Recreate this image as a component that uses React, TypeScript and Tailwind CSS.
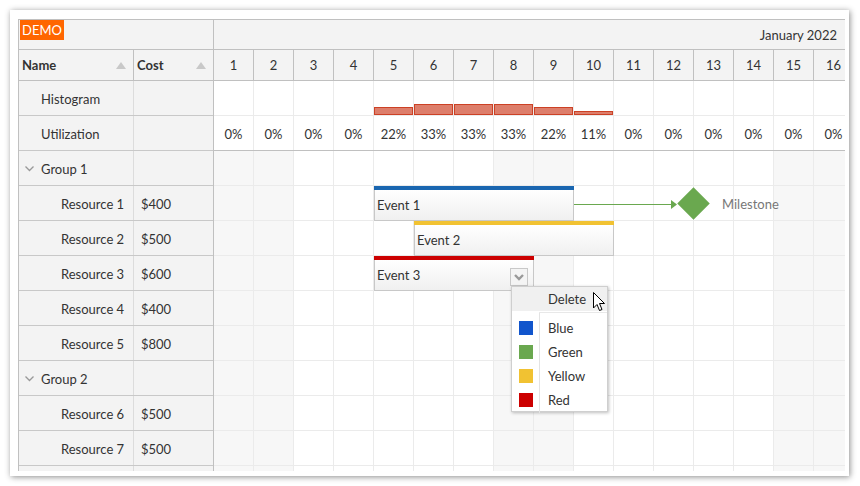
import React from "react";

const days = Array.from({ length: 16 }, (_, i) => i + 1);
const weekend = [1, 2, 8, 9, 15, 16];

// histogram bar height (px) and utilization label per day
const histogram: Record<number, number> = { 5: 8, 6: 11, 7: 11, 8: 11, 9: 8, 10: 4 };
const utilization: Record<number, string> = {
  5: "22%",
  6: "33%",
  7: "33%",
  8: "33%",
  9: "22%",
  10: "11%",
};

type Row = { id: string; name: string; cost?: string; group?: boolean };

const rows: Row[] = [
  { id: "g1", name: "Group 1", group: true },
  { id: "r1", name: "Resource 1", cost: "$400" },
  { id: "r2", name: "Resource 2", cost: "$500" },
  { id: "r3", name: "Resource 3", cost: "$600" },
  { id: "r4", name: "Resource 4", cost: "$400" },
  { id: "r5", name: "Resource 5", cost: "$800" },
  { id: "g2", name: "Group 2", group: true },
  { id: "r6", name: "Resource 6", cost: "$500" },
  { id: "r7", name: "Resource 7", cost: "$500" },
  { id: "r8", name: "" },
];

const menuColors = [
  { name: "Blue", color: "bg-[#1155cc]" },
  { name: "Green", color: "bg-[#6aa84f]" },
  { name: "Yellow", color: "bg-[#f1c232]" },
  { name: "Red", color: "bg-[#cc0000]" },
];

function SortArrow() {
  return (
    <svg width="10" height="7" viewBox="0 0 10 7" className="absolute right-[7px] top-[12px]">
      <polygon points="5,0 10,7 0,7" fill="#c8c8c8" />
    </svg>
  );
}

function Event({
  left,
  width,
  text,
  bar,
  menu,
}: {
  left: number;
  width: number;
  text: string;
  bar: string;
  menu?: boolean;
}) {
  return (
    <div className="absolute top-0 h-[35px] flex flex-col" style={{ left, width }}>
      <div className={`h-[4px] shrink-0 ${bar}`} />
      <div className="relative flex-1 flex items-center pl-[2px] pt-[1px] border-x border-b border-[#c8c8c8] bg-gradient-to-b from-white to-[#f0f0f0] text-[#333]">
        {text}
        {menu && (
          <div className="absolute right-[5px] bottom-[4px] w-[18px] h-[18px] border border-[#c8c8c8] bg-[#f4f4f4] flex items-center justify-center">
            <svg width="10" height="7" viewBox="0 0 10 7">
              <polyline points="1,1 5,5 9,1" fill="none" stroke="#999" strokeWidth="2.4" />
            </svg>
          </div>
        )}
      </div>
    </div>
  );
}

function TimelineRow({ row }: { row: Row }) {
  return (
    <div className="relative flex h-[35px] border-b border-[#ebebeb]">
      {days.map((d) => (
        <div
          key={d}
          className={`w-[40px] shrink-0 border-r border-[#ebebeb] ${
            weekend.includes(d) ? "bg-[#f7f7f7]" : "bg-white"
          }`}
        />
      ))}
      {row.id === "r1" && (
        <>
          <Event left={160} width={200} text="Event 1" bar="bg-[#1a66b0]" />
          <svg
            className="absolute left-[360px] top-[13px]"
            width="104"
            height="10"
            viewBox="0 0 104 10"
          >
            <line x1="0" y1="5.5" x2="98" y2="5.5" stroke="#6aa84f" strokeWidth="1" />
            <polygon points="97,1 103,5.5 97,10" fill="#6aa84f" />
          </svg>
          <div className="absolute left-[468px] top-[6px] w-[23px] h-[23px] rotate-45 bg-[#6aa84f]" />
          <div className="absolute left-[508px] top-0 h-[35px] pt-[2px] flex items-center text-[#777]">
            Milestone
          </div>
        </>
      )}
      {row.id === "r2" && <Event left={200} width={200} text="Event 2" bar="bg-[#f1c232]" />}
      {row.id === "r3" && <Event left={160} width={160} text="Event 3" bar="bg-[#cc0000]" menu />}
    </div>
  );
}

export default function App() {
  return (
    <div className="min-h-screen bg-white p-[10px] font-['Lato',sans-serif] text-[13px] text-[#333]">
      <div className="relative w-[839px] h-[466px] bg-white pl-[8px] pt-[9px] shadow-[1px_1px_6px_rgba(0,0,0,0.45)]">
        <div className="flex w-[827px] h-[452px] overflow-hidden border-l border-t border-[#c0c0c0]">
          {/* Row headers */}
          <div className="w-[195px] shrink-0 bg-[#f3f3f3] border-r border-[#c0c0c0]">
            <div className="h-[30px] border-b border-[#c0c0c0]">
              <span className="inline-block ml-[1px] h-[20px] px-[2px] leading-[20px] bg-[#ff6600] text-white">
                DEMO
              </span>
            </div>
            <div className="flex h-[31px] border-b border-[#c0c0c0] font-bold">
              <div className="relative w-[115px] border-r border-[#c0c0c0] pl-[3px] pt-[2px] flex items-center">
                Name
                <SortArrow />
              </div>
              <div className="relative flex-1 pl-[3px] pt-[2px] flex items-center">
                Cost
                <SortArrow />
              </div>
            </div>
            {["Histogram", "Utilization"].map((t) => (
              <div key={t} className="flex h-[35px] border-b border-[#c8c8c8]">
                <div className="w-[115px] border-r border-[#dcdcdc] pl-[22px] pt-[4px] flex items-center">
                  {t}
                </div>
                <div className="flex-1" />
              </div>
            ))}
            {rows.map((r) => (
              <div key={r.id} className="flex h-[35px] border-b border-[#c8c8c8]">
                <div
                  className={`w-[115px] border-r border-[#dcdcdc] pt-[4px] flex items-center ${
                    r.group ? "pl-[6px]" : "pl-[42px]"
                  }`}
                >
                  {r.group && (
                    <svg width="9" height="6" viewBox="0 0 9 6" className="mr-[7px] -mt-[2px]">
                      <polyline points="0.5,0.5 4.5,4.5 8.5,0.5" fill="none" stroke="#999" strokeWidth="1.3" />
                    </svg>
                  )}
                  {r.name}
                </div>
                <div className="flex-1 pl-[7px] pt-[4px] flex items-center">{r.cost}</div>
              </div>
            ))}
          </div>

          {/* Timeline */}
          <div className="flex-1 overflow-hidden">
            <div className="h-[30px] border-b border-[#c0c0c0] bg-[#f3f3f3] flex items-center justify-end pr-[8px] pt-[3px]">
              January 2022
            </div>
            <div className="flex w-[640px] h-[31px] border-b border-[#c0c0c0] bg-[#f3f3f3]">
              {days.map((d) => (
                <div
                  key={d}
                  className="w-[40px] shrink-0 border-r border-[#c0c0c0] pt-[2px] flex items-center justify-center"
                >
                  {d}
                </div>
              ))}
            </div>
            <div className="flex w-[640px] h-[35px] border-b border-[#ebebeb] bg-white">
              {days.map((d) => (
                <div key={d} className="w-[40px] shrink-0 border-r border-[#ebebeb] flex items-end">
                  {histogram[d] && (
                    <div
                      className="w-full bg-[#dd7e6b] border border-[#cc4125]"
                      style={{ height: histogram[d] }}
                    />
                  )}
                </div>
              ))}
            </div>
            <div className="flex w-[640px] h-[35px] border-b border-[#c0c0c0] bg-white">
              {days.map((d) => (
                <div
                  key={d}
                  className="w-[40px] shrink-0 border-r border-[#ebebeb] pt-[4px] flex items-center justify-center"
                >
                  {utilization[d] ?? "0%"}
                </div>
              ))}
            </div>
            <div className="w-[640px]">
              {rows.map((r) => (
                <TimelineRow key={r.id} row={r} />
              ))}
            </div>
          </div>
        </div>

        {/* Context menu */}
        <div className="absolute left-[501px] top-[276px] w-[97px] h-[126px] bg-white border border-[#cfcfcf] shadow-[1px_1px_3px_rgba(0,0,0,0.25)]">
          <div className="h-[24px] bg-[#f0f0f0] flex items-center pl-[36px] pt-[2px]">Delete</div>
          <div className="relative mt-[1px] pt-[4px]">
            <div className="absolute left-[27px] top-0 bottom-[-1px] border-l border-[#e3e3e3]" />
            <div className="absolute left-[27px] right-0 top-0 border-t border-[#e8e8e8]" />
            {menuColors.map((c) => (
              <div key={c.name} className="h-[24px] flex items-center">
                <div className={`ml-[7px] w-[14px] h-[14px] ${c.color}`} />
                <span className="ml-[15px] pt-[2px]">{c.name}</span>
              </div>
            ))}
          </div>
        </div>

        {/* Mouse pointer */}
        <svg
          className="absolute left-[583px] top-[282px]"
          width="13"
          height="20"
          viewBox="0 0 13 20"
        >
          <path
            d="M0.5 0.5 L0.5 16 L4 12.5 L6.5 18.5 L9 17.5 L6.5 11.5 L11.5 11.5 Z"
            fill="white"
            stroke="black"
            strokeWidth="1"
            strokeLinejoin="round"
          />
        </svg>
      </div>
    </div>
  );
}
